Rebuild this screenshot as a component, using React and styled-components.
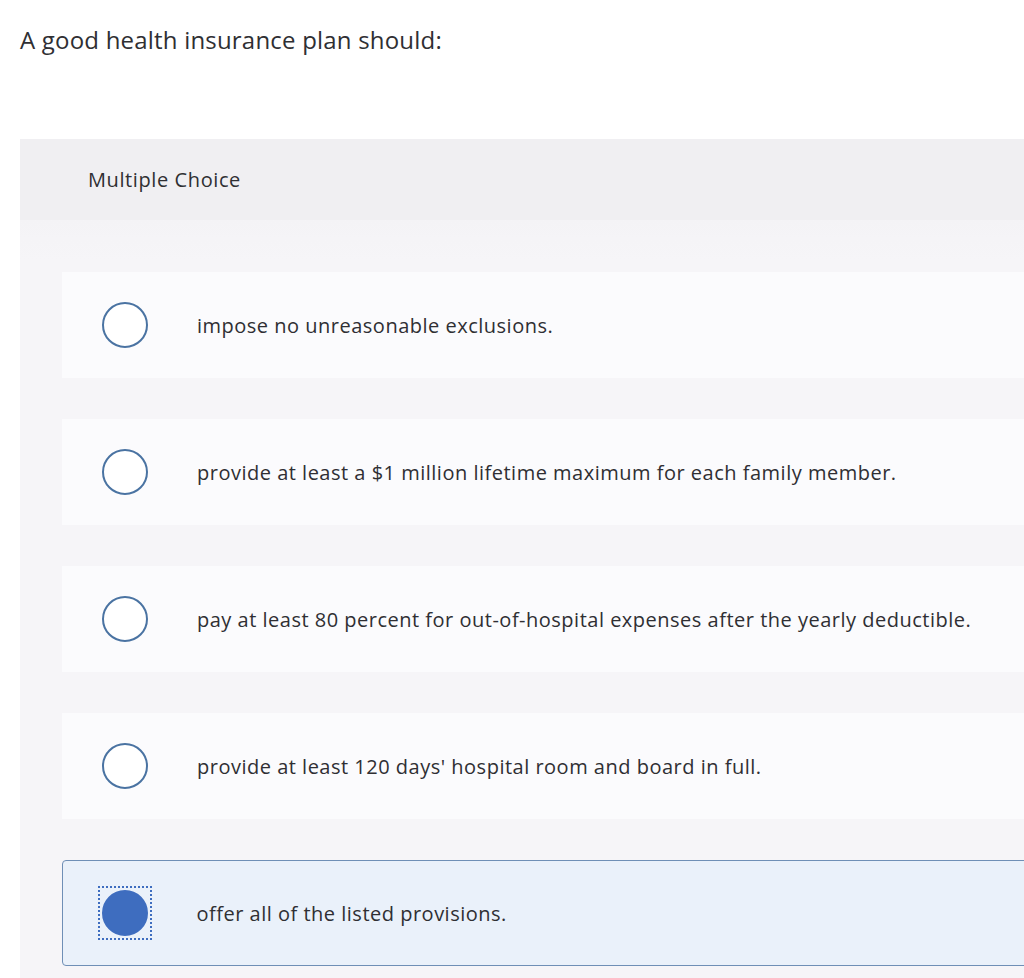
import React from "react";
import styled, { createGlobalStyle } from "styled-components";

const Global = createGlobalStyle`
  html, body { margin: 0; padding: 0; background: #ffffff; }
  body { overflow-x: hidden; font-family: "Open Sans", "Liberation Sans", sans-serif; color: #2f2f33; }
  #root { overflow: hidden; }
`;

const Page = styled.div`
  display: flex;
  flex-direction: column;
  padding: 25px 0 0 20px;
`;

const Question = styled.h1`
  margin: 0;
  font-size: 24px;
  line-height: 30px;
  font-weight: 400;
  letter-spacing: 0.2px;
  color: #2f2f33;
`;

const Card = styled.section`
  margin-top: 84px;
  width: calc(100% + 40px);
  background: #f6f5f8;
`;

const CardHeader = styled.div`
  height: 81px;
  display: flex;
  align-items: center;
  padding-left: 68px;
  background: #f0eff2;
  font-size: 20px;
  letter-spacing: 0.6px;
  color: #2f2f33;
`;

const Choices = styled.div`
  display: flex;
  flex-direction: column;
  gap: 41px;
  padding: 52px 0 12px 42px;
  background: linear-gradient(#f4f3f6, #f6f5f8 40px);
`;

const Choice = styled.div`
  height: 106px;
  box-sizing: border-box;
  display: flex;
  align-items: center;
  padding-left: ${(p) => (p.$selected ? "34.5px" : "36px")};
  background: ${(p) => (p.$selected ? "#eaf1fa" : "#fbfbfd")};
  border: ${(p) => (p.$selected ? "1.5px solid #6f8fb6" : "none")};
  border-radius: ${(p) => (p.$selected ? "4px" : "0")};
`;

const Focus = styled.span`
  flex: none;
  display: flex;
  padding: 2px;
  border: 2px dotted ${(p) => (p.$selected ? "#3e6dbf" : "transparent")};
`;

const Radio = styled.span`
  width: 46px;
  height: 46px;
  box-sizing: border-box;
  border-radius: 50%;
  border: 2px solid ${(p) => (p.$selected ? "#3e6dbf" : "#4a73a2")};
  background: ${(p) => (p.$selected ? "#3e6dbf" : "#ffffff")};
`;

const Label = styled.span`
  margin-left: 45px;
  font-size: 20px;
  letter-spacing: 0.5px;
  color: #2f2f33;
`;

const options = [
  "impose no unreasonable exclusions.",
  "provide at least a $1 million lifetime maximum for each family member.",
  "pay at least 80 percent for out-of-hospital expenses after the yearly deductible.",
  "provide at least 120 days' hospital room and board in full.",
  "offer all of the listed provisions.",
];

export default function App() {
  const selected = 4;
  return (
    <>
      <Global />
      <Page>
        <Question>A good health insurance plan should:</Question>
        <Card>
          <CardHeader>Multiple Choice</CardHeader>
          <Choices>
            {options.map((o, i) => (
              <Choice key={i} $selected={i === selected}>
                <Focus $selected={i === selected}>
                  <Radio $selected={i === selected} />
                </Focus>
                <Label>{o}</Label>
              </Choice>
            ))}
          </Choices>
        </Card>
      </Page>
    </>
  );
}
